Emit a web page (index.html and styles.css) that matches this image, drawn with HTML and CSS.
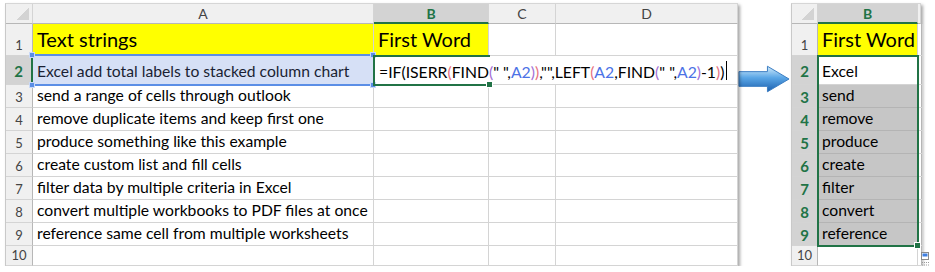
FILE: index.html
```html
<!DOCTYPE html>
<html lang="en">
  <head>
    <meta charset="UTF-8" />
    <meta name="viewport" content="width=device-width, initial-scale=1.0" />
    <title>Extract first word - Excel</title>
    <link rel="stylesheet" href="styles.css">
  </head>
  <body>
    <div class="page">
      <!-- source sheet with formula being typed -->
      <div class="sheet">
        <div class="grid grid-left">
          <div class="corner"></div>
          <div class="colhead">A</div>
          <div class="colhead active">B</div>
          <div class="colhead">C</div>
          <div class="colhead">D</div>

          <div class="rowhead">1</div>
          <div class="cell title yellow">Text strings</div>
          <div class="cell title yellow">First Word</div>
          <div class="cell"></div>
          <div class="cell"></div>

          <div class="rowhead active-left">2</div>
          <div class="cell tall refcell">
            <span>Excel add total labels to stacked column chart</span>
            <div class="ref-box">
              <span class="handle h-tl"></span><span class="handle h-bl"></span>
              <span class="handle h-tr"></span><span class="handle h-br"></span>
            </div>
          </div>
          <div class="cell tall formula">
            <span>=IF(ISERR<span class="p2">(</span>FIND<span class="p3">(</span>" ",<span class="r">A2</span><span class="p3">)</span><span class="p2">)</span>,"",LEFT<span class="p2">(</span><span class="r">A2</span>,FIND<span class="p3">(</span>" ",<span class="r">A2</span><span class="p3">)</span>-1<span class="p2">)</span>)</span><span class="caret"></span>
            <div class="active-box"><span class="fill-handle"></span></div>
          </div>

          <div class="rowhead">3</div>
          <div class="cell">send a range of cells through outlook</div>
          <div class="cell"></div><div class="cell"></div><div class="cell"></div>

          <div class="rowhead">4</div>
          <div class="cell">remove duplicate items and keep first one</div>
          <div class="cell"></div><div class="cell"></div><div class="cell"></div>

          <div class="rowhead">5</div>
          <div class="cell">produce something like this example</div>
          <div class="cell"></div><div class="cell"></div><div class="cell"></div>

          <div class="rowhead">6</div>
          <div class="cell">create custom list and fill cells</div>
          <div class="cell"></div><div class="cell"></div><div class="cell"></div>

          <div class="rowhead">7</div>
          <div class="cell">filter data by multiple criteria in Excel</div>
          <div class="cell"></div><div class="cell"></div><div class="cell"></div>

          <div class="rowhead">8</div>
          <div class="cell">convert multiple workbooks to PDF files at once</div>
          <div class="cell"></div><div class="cell"></div><div class="cell"></div>

          <div class="rowhead">9</div>
          <div class="cell">reference same cell from multiple worksheets</div>
          <div class="cell"></div><div class="cell"></div><div class="cell"></div>

          <div class="rowhead">10</div>
          <div class="cell"></div><div class="cell"></div><div class="cell"></div><div class="cell"></div>
        </div>
      </div>

      <div class="arrow">
        <svg width="54" height="32" viewBox="0 0 54 32">
          <defs>
            <linearGradient id="arrowFill" x1="0" y1="0" x2="0" y2="1">
              <stop offset="0" stop-color="#d4ecfb" />
              <stop offset="0.45" stop-color="#5aa6e6" />
              <stop offset="1" stop-color="#1a5fae" />
            </linearGradient>
          </defs>
          <path d="M1 8.5 H30 V3 L52 16 L30 29 V23.5 H1 Z" fill="url(#arrowFill)" stroke="#3a7cc2" stroke-width="1" stroke-linejoin="round" />
        </svg>
      </div>

      <!-- result sheet -->
      <div class="sheet">
        <div class="grid grid-right">
          <div class="corner"></div>
          <div class="colhead active">B</div>
          <div class="colhead"></div>

          <div class="rowhead">1</div>
          <div class="cell title yellow">First Word</div>
          <div class="cell"></div>

          <div class="rowhead sel tall">2</div>
          <div class="cell tall anchor">
            <span>Excel</span>
            <div class="select-box"><span class="fill-handle"></span></div>
          </div>
          <div class="cell tall"></div>

          <div class="rowhead sel">3</div>
          <div class="cell grey">send</div>
          <div class="cell"></div>

          <div class="rowhead sel">4</div>
          <div class="cell grey">remove</div>
          <div class="cell"></div>

          <div class="rowhead sel">5</div>
          <div class="cell grey">produce</div>
          <div class="cell"></div>

          <div class="rowhead sel">6</div>
          <div class="cell grey">create</div>
          <div class="cell"></div>

          <div class="rowhead sel">7</div>
          <div class="cell grey">filter</div>
          <div class="cell"></div>

          <div class="rowhead sel">8</div>
          <div class="cell grey">convert</div>
          <div class="cell"></div>

          <div class="rowhead sel">9</div>
          <div class="cell grey">reference</div>
          <div class="cell"></div>

          <div class="rowhead">10</div>
          <div class="cell"></div>
          <div class="cell"></div>
        </div>
        <div class="quick">
          <svg width="9" height="14" viewBox="0 0 9 14">
            <rect x="1.5" y="0.5" width="7" height="7" fill="#fff" stroke="#8a8a8a" />
            <rect x="2.5" y="1.5" width="5" height="3" fill="#3f7fe0" />
            <path d="M2 10.5 H3 M4 10.5 H5 M6 10.5 H7 M8 10.5 H9 M2 13 H3 M4 13 H5 M6 13 H7 M8 13 H9" stroke="#9a9a9a" stroke-width="1" />
          </svg>
        </div>
      </div>
    </div>
  </body>
</html>
```

FILE: styles.css
```css
body {
  margin: 0;
  background: #fff;
  font-family: Lato, "Open Sans", sans-serif;
  color: #000;
}

.page {
  display: flex;
  align-items: flex-start;
  padding: 3px 0 0 5px;
}

.sheet {
  position: relative;
  border-top: 1px solid #d6d6d6;
  border-left: 1px solid #c9c9c9;
  box-shadow: 2px 2px 3px rgba(0, 0, 0, 0.35);
}

.grid {
  display: grid;
  grid-template-rows: 20px 32px 29px repeat(7, 23px) 20px;
}

.grid-left {
  grid-template-columns: 27px 341px 115px 67px 182px;
}

.grid-right {
  grid-template-columns: 26px 100px 3px;
}

.corner,
.colhead,
.rowhead,
.cell {
  box-sizing: border-box;
  border-right: 1px solid #d4d4d4;
  border-bottom: 1px solid #d4d4d4;
}

.corner {
  background: #f0f0f0 linear-gradient(to bottom right, transparent 50%, #d3d3d3 50%) no-repeat;
  background-size: 13px 13px;
  background-position: right 3px bottom 3px;
  border-bottom-color: #b7b7b7;
}

.colhead {
  background: #f0f0f0;
  border-bottom-color: #b7b7b7;
  color: #444;
  font-size: 14px;
  text-align: center;
  line-height: 19px;
}

.colhead.active {
  background: #d3d3d3;
  color: #217346;
  font-weight: bold;
  border-bottom: 2px solid #217346;
  line-height: 20px;
}

.rowhead {
  background: #f0f0f0;
  border-right-color: #b7b7b7;
  color: #444;
  font-size: 13px;
  display: flex;
  align-items: flex-end;
  justify-content: center;
  padding-bottom: 2px;
}

.rowhead.active-left {
  background: #d3d3d3;
  color: #217346;
  font-weight: bold;
  font-size: 15px;
  border-right: 2px solid #217346;
  padding-bottom: 4px;
}

.rowhead.sel {
  background: #d3d3d3;
  color: #217346;
  font-weight: bold;
  font-size: 15px;
  padding-bottom: 1px;
}

.rowhead.sel.tall {
  padding-bottom: 4px;
}

.cell {
  display: flex;
  align-items: flex-end;
  padding: 0 0 3px 4px;
  font-size: 15.7px;
  line-height: 17px;
  white-space: nowrap;
  min-width: 0;
}

.cell.tall {
  padding-bottom: 4px;
}

.cell.title {
  font-size: 20px;
  line-height: 22px;
  padding-bottom: 5px;
}

.yellow {
  background: #ffff00;
}

.grey {
  background: #c6c6c6;
  border-bottom-color: #b4b4b4;
}

.refcell {
  position: relative;
  background: #d6e0f6;
  color: #1a1f33;
}

.formula {
  position: relative;
  grid-column: span 3;
  background: #fff;
  padding-left: 5px;
  font-size: 15.75px;
}

.anchor {
  position: relative;
}

.p2 {
  color: #e7707f;
}

.p3 {
  color: #a46fd6;
}

.r {
  color: #4c72e6;
}

.caret {
  width: 1px;
  height: 19px;
  margin-left: 2px;
  background: #000;
}

/* selection overlays */
.ref-box {
  position: absolute;
  z-index: 1;
  left: -1px;
  right: 0;
  top: -2px;
  bottom: -2px;
  border-top: 2px solid #5b8ee6;
  border-bottom: 2px solid #5b8ee6;
}

.handle {
  position: absolute;
  width: 4px;
  height: 4px;
  background: #5b8ee6;
  border: 1px solid #c9d9f7;
}

.h-tl { left: -3px; top: -4px; }
.h-bl { left: -3px; bottom: -4px; }
.h-tr { right: -3px; top: -4px; }
.h-br { right: -3px; bottom: -4px; }

.active-box {
  position: absolute;
  z-index: 1;
  left: -1px;
  top: -1px;
  width: 117px;
  height: 31px;
  box-sizing: border-box;
  border: 2px solid #217346;
  border-right: none;
}

.select-box {
  position: absolute;
  z-index: 1;
  left: -1px;
  top: -1px;
  width: 102px;
  height: 192px;
  box-sizing: border-box;
  border: 2px solid #217346;
}

.fill-handle {
  position: absolute;
  right: -4px;
  bottom: -4px;
  width: 5px;
  height: 5px;
  background: #217346;
  border: 1px solid #fff;
}

.active-box .fill-handle {
  right: -3px;
}

.arrow {
  width: 53px;
  padding-top: 60px;
  display: flex;
  justify-content: flex-start;
}

.quick {
  position: absolute;
  left: 128px;
  top: 246px;
}
```
